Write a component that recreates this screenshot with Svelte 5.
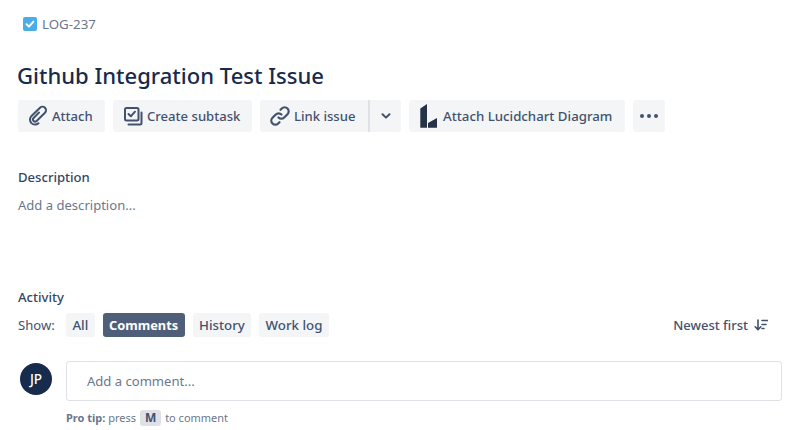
<script>
  const filters = ['All', 'Comments', 'History', 'Work log'];
</script>

<main class="page">
  <div class="crumb">
    <svg class="check" viewBox="0 0 14 14" width="14" height="14"><rect width="14" height="14" rx="2" fill="#4bade8"/><path d="M3.6 7.2l2.4 2.4 4.4-5" fill="none" stroke="#fff" stroke-width="2" stroke-linecap="round" stroke-linejoin="round"/></svg>
    <span>LOG-237</span>
  </div>
  <h1>Github Integration Test Issue</h1>
  <div class="toolbar">
    <button class="btn attach">
      <svg viewBox="0 0 24 24" width="24" height="24" fill="none" stroke="#42526e" stroke-width="2" stroke-linecap="round"><path d="M13 8.5L7.6 14a2.1 2.1 0 0 0 3 3L19 8.8a3.5 3.5 0 0 0-5-5L5.5 12a5 5 0 0 0 7 7.2"/></svg>
      <span>Attach</span>
    </button>
    <button class="btn subtask">
      <svg viewBox="0 0 24 24" width="24" height="24" fill="none" stroke="#42526e" stroke-width="2" stroke-linecap="round" stroke-linejoin="round"><rect x="4" y="4" width="13.5" height="12.5" rx="1.5"/><path d="M7.5 10l2.3 2.3 4.2-4.6M20.5 8.5v10.5a1.5 1.5 0 0 1-1.5 1.5H7.5"/></svg>
      <span>Create subtask</span>
    </button>
    <div class="split">
      <button class="btn link">
        <svg viewBox="0 0 24 24" width="24" height="24" fill="none" stroke="#42526e" stroke-width="2.2" stroke-linecap="round"><path d="M10.5 13.5a4 4 0 0 0 5.7 0l3.3-3.3a4 4 0 0 0-5.7-5.7l-1.3 1.3M13.5 10.5a4 4 0 0 0-5.7 0l-3.3 3.3a4 4 0 0 0 5.7 5.7l1.3-1.3"/></svg>
        <span>Link issue</span>
      </button>
      <button class="btn more" aria-label="More link options">
        <svg viewBox="0 0 10 6" width="10" height="6" fill="none" stroke="#42526e" stroke-width="2" stroke-linecap="round" stroke-linejoin="round"><path d="M1.5 1.2L5 4.6l3.5-3.4"/></svg>
      </button>
    </div>
    <button class="btn lucid">
      <svg viewBox="0 0 17 24" width="17" height="24" fill="#253247"><path d="M.3 4.5L7 0v23.8H.3zM8 19l9-5v9.8H8z"/></svg>
      <span>Attach Lucidchart Diagram</span>
    </button>
    <button class="btn dots" aria-label="More">
      <svg viewBox="0 0 18 4" width="18" height="4" fill="#42526e"><circle cx="2" cy="2" r="2"/><circle cx="9" cy="2" r="2"/><circle cx="16" cy="2" r="2"/></svg>
    </button>
  </div>

  <section class="description">
    <h2>Description</h2>
    <p>Add a description...</p>
  </section>

  <section class="activity">
    <h2>Activity</h2>
    <div class="show">
      <span class="label">Show:</span>
      {#each filters as f}
        <button class="chip" class:on={f === 'Comments'}>{f}</button>
      {/each}
      <button class="sort">
        <span>Newest first</span>
        <svg viewBox="0 0 14 12" width="14" height="12" fill="none" stroke="#42526e" stroke-width="1.6" stroke-linecap="round" stroke-linejoin="round"><path d="M4 1v9.5M1.2 7.8L4 10.6l2.8-2.8M8 1.5h5.5M8 5.5h4M8 9.5h2"/></svg>
      </button>
    </div>
  </section>

  <div class="composer">
    <div class="avatar">JP</div>
    <div class="box">
      <div class="input">Add a comment...</div>
      <div class="tip"><b>Pro tip:</b> press <kbd>M</kbd> to comment</div>
    </div>
  </div>
</main>

<style>
  :global(body) { margin: 0; background: #fff; }
  .page {
    width: 792px; height: 430px; overflow: hidden; box-sizing: border-box;
    padding: 15px 10px 0 18px;
    font-family: "Noto Sans", "Open Sans", sans-serif;
    color: #172b4d; font-size: 14px;
  }
  .crumb { display: flex; align-items: center; gap: 5px; height: 18px; padding-left: 5px; color: #6b778c; font-size: 13.3px; }
  .check { flex: none; }
  h1 { margin: 26px 0 0 -1px; height: 32px; line-height: 32px; font-size: 22.05px; font-weight: 500; color: #172b4d; }
  .toolbar { display: flex; margin-top: 9px; gap: 8px; }
  button { font: inherit; border: 0; }
  .btn {
    height: 32px; background: #f4f5f7; color: #42526e; border-radius: 3px; padding: 0;
    display: flex; align-items: center; font-weight: 500; font-size: 13.1px; white-space: nowrap;
  }
  .btn svg { flex: none; }
  .attach { width: 87px; padding-left: 8px; gap: 2px; }
  .subtask { width: 139px; padding-left: 8px; gap: 2px; }
  .split { display: flex; }
  .link { width: 108px; padding-left: 8px; gap: 2px; border-radius: 3px 0 0 3px; }
  .more { width: 33px; border-left: 2px solid #dfe1e6; border-radius: 0 3px 3px 0; justify-content: center; }
  .lucid { width: 216px; padding-left: 11px; gap: 6px; font-size: 13.25px; }
  .dots { width: 32px; justify-content: center; }
  h2 { margin: 0; font-size: 13.1px; font-weight: 500; color: #344563; line-height: 18px; }
  .description { margin-top: 36px; }
  .description p { margin: 10px 0 0; font-size: 13.05px; color: #6b778c; line-height: 18px; }
  .activity { margin-top: 74px; }
  .show { display: flex; align-items: center; margin-top: 7px; gap: 8px; height: 24px; font-size: 13.1px; }
  .label { color: #42526e; width: 40px; }
  .chip { height: 24px; padding: 0 6.4px; border-radius: 3px; background: #f4f5f7; color: #42526e; font-weight: 500; font-size: 13.3px; white-space: nowrap; }
  .chip.on { background: #505f79; color: #fff; font-weight: 700; font-size: 12.8px; padding: 0 6.4px; }
  .sort { margin-left: auto; display: flex; align-items: center; gap: 6px; background: none; padding: 0 14px 0 0; color: #42526e; font-weight: 500; font-size: 13px; }
  .composer { display: flex; margin-top: 24px; }
  .avatar {
    flex: none; width: 32px; height: 32px; margin: 2px 14px 0 2px; border-radius: 50%;
    background: #172b4d; color: #fff; font-size: 13.5px; font-weight: 500;
    display: flex; align-items: center; justify-content: center;
  }
  .box { flex: 1; }
  .input { height: 38px; line-height: 38px; border: 1px solid #dfe1e6; border-radius: 3px; padding-left: 20px; color: #6b778c; font-size: 13.05px; }
  .tip { margin-top: 8px; font-size: 11px; color: #6b778c; line-height: 18px; }
  .tip b { font-weight: 700; }
  kbd { font: inherit; font-weight: 700; display: inline-block; background: #dfe1e6; color: #42526e; border-radius: 3px; padding: 0 5px; line-height: 16px; margin: 0 1px; font-size: 12px; }
</style>
